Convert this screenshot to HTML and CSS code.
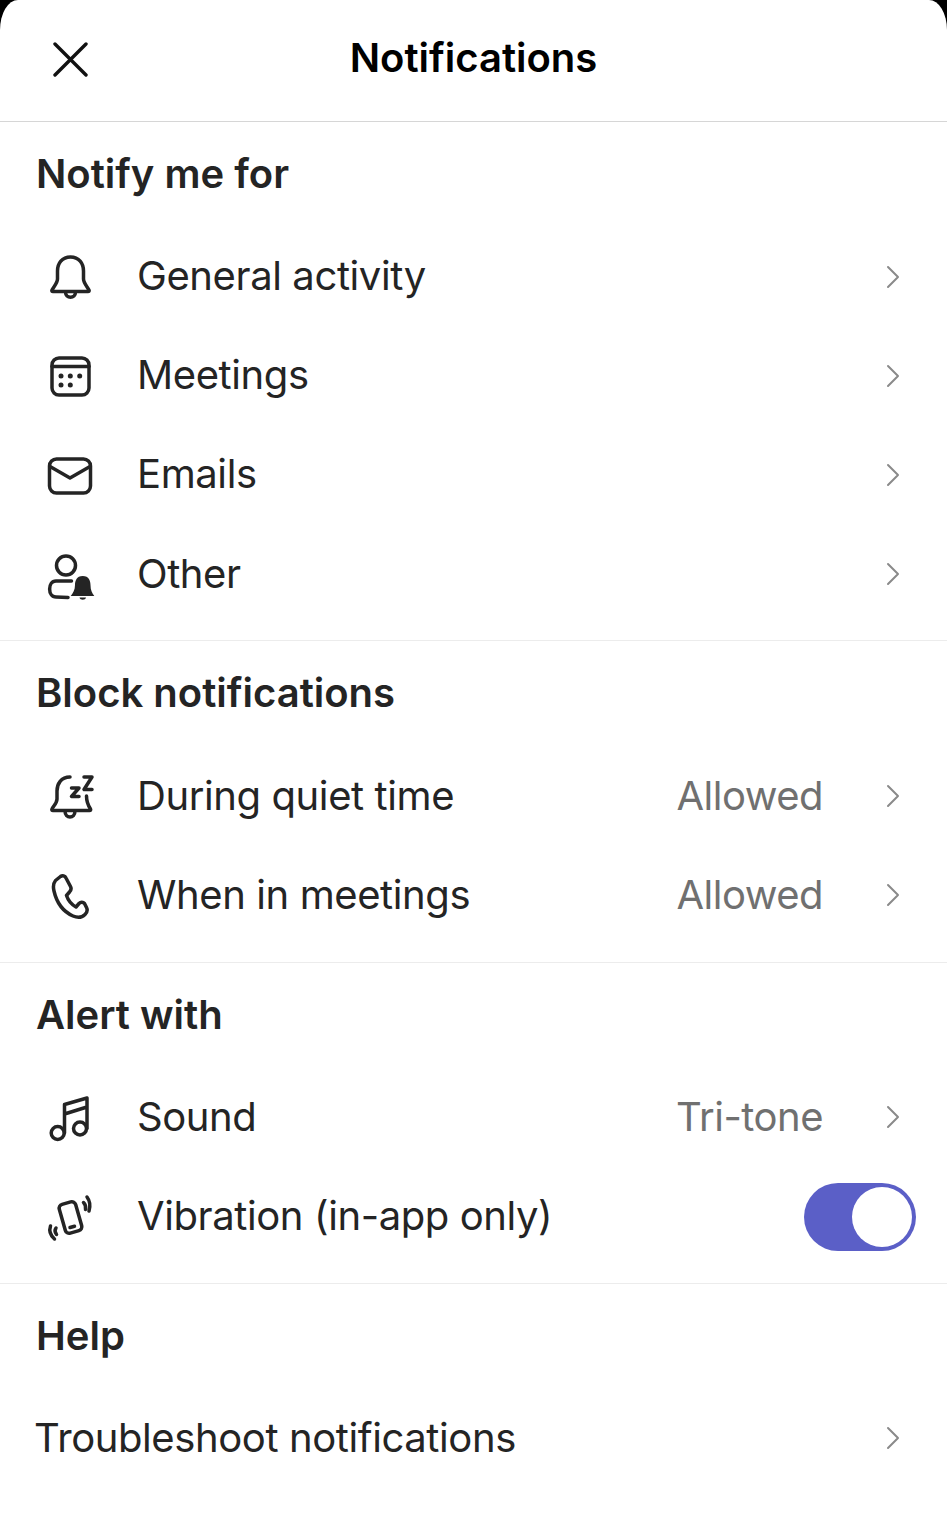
FILE: index.html
```html
<!DOCTYPE html>
<html lang="en">
<head>
    <meta charset="UTF-8" />
    <meta name="viewport" content="width=device-width, initial-scale=1.0" />
    <title>Notifications</title>
    <link rel="stylesheet" href="styles.css">
</head>
<body>
    <div class="sheet">
        <header class="top-bar">
            <svg class="close-icon" viewBox="0 0 36 36"><path d="M3 3 L34 34 M34 3 L3 34" /></svg>
            <h1>Notifications</h1>
        </header>

        <section class="group">
            <h2>Notify me for</h2>
            <div class="row">
                <svg class="row-icon" viewBox="0 0 50 50"><path d="M25.5 5 C17 5 12.5 11.5 12.5 19 L12.5 27 C12.5 31 8.5 35 7 38 C6.5 39 7 39.5 8 39.5 L43 39.5 C44 39.5 44.5 39 44 38 C42.5 35 38.5 31 38.5 27 L38.5 19 C38.5 11.5 34 5 25.5 5 Z M20.5 40 C20.5 47 30.5 47 30.5 40" /></svg>
                <span class="label">General activity</span>
                <svg class="chevron" viewBox="0 0 14 24"><path d="M2 2 L12 12 L2 22" /></svg>
            </div>
            <div class="row">
                <svg class="row-icon" viewBox="0 0 50 50">
                    <rect x="7" y="7" width="37" height="37" rx="7" />
                    <path d="M7 15.500 L44 15.500" />
                    <g class="dots">
                        <circle cx="16" cy="25" r="2.500" /><circle cx="25.300" cy="25" r="2.500" /><circle cx="34.700" cy="25" r="2.500" />
                        <circle cx="16" cy="34" r="2.500" /><circle cx="25.300" cy="34" r="2.500" />
                    </g>
                </svg>
                <span class="label">Meetings</span>
                <svg class="chevron" viewBox="0 0 14 24"><path d="M2 2 L12 12 L2 22" /></svg>
            </div>
            <div class="row">
                <svg class="row-icon" viewBox="0 0 50 50">
                    <rect x="4.500" y="9" width="41" height="34" rx="7" />
                    <path d="M5 16.500 L25 28 L45 16.500" />
                </svg>
                <span class="label">Emails</span>
                <svg class="chevron" viewBox="0 0 14 24"><path d="M2 2 L12 12 L2 22" /></svg>
            </div>
            <div class="row">
                <svg class="row-icon" viewBox="0 0 50 50">
                    <circle cx="21" cy="15.500" r="9.500" />
                    <path d="M26.500 31 L11 31 C2.500 31 2.500 47 11 47 L23 47.500" />
                    <path class="solid" d="M37.700 26 C31.500 26 30 31 30 35 C30 40 28 43 25.700 46 L49.300 46 C47 43 45.500 40 45.500 35 C45.500 31 44 26 37.700 26 Z M34.500 47.500 L41 47.500 C40.500 50.500 35 50.500 34.500 47.500 Z" />
                </svg>
                <span class="label">Other</span>
                <svg class="chevron" viewBox="0 0 14 24"><path d="M2 2 L12 12 L2 22" /></svg>
            </div>
        </section>

        <section class="group">
            <h2>Block notifications</h2>
            <div class="row">
                <svg class="row-icon" viewBox="0 0 50 50">
                    <path d="M25 5 C16 5 12 12 12 19 L12 27 C12 31 8.500 34 7 37 C6.500 38 7 38.500 8 38.500 L44.500 38.500 C45.500 38.500 46 38 45.500 37 C43.500 34 41.500 31 41.500 24 M20 39 C20 47 30 47 30 39" />
                    <path d="M26.500 16 L34 16 L26.500 24.500 L34 24.500 M39 5 L47 5 L39 17.500 L47 17.500" />
                </svg>
                <span class="label">During quiet time</span>
                <span class="value">Allowed</span>
                <svg class="chevron" viewBox="0 0 14 24"><path d="M2 2 L12 12 L2 22" /></svg>
            </div>
            <div class="row">
                <svg class="row-icon" viewBox="0 0 50 50"><path d="M10.500 9.500 L15.500 5.500 C17.500 4 20 4.800 21 7 L25.500 15.500 C26.500 17.500 26 19.500 24.500 21 L21.500 24.500 C23 29 26.500 33.500 31 36 L34 32.500 C35.500 31 38 30.800 39.500 32.500 L41.500 36.500 C42.800 39 42 41.500 40 43.500 C37 46.500 32.500 47 28 45 C18 40.500 11.500 31 9 20 C8 16 8.500 12 10.500 9.500 Z" /></svg>
                <span class="label">When in meetings</span>
                <span class="value">Allowed</span>
                <svg class="chevron" viewBox="0 0 14 24"><path d="M2 2 L12 12 L2 22" /></svg>
            </div>
        </section>

        <section class="group">
            <h2>Alert with</h2>
            <div class="row">
                <svg class="row-icon" viewBox="0 0 50 50">
                    <circle cx="12.700" cy="40" r="6.500" />
                    <circle cx="35" cy="35.500" r="6.500" />
                    <path d="M19.500 40 L19.500 11.500 L42 5 L42 35.500 M19.500 21 L42 14" />
                </svg>
                <span class="label">Sound</span>
                <span class="value">Tri-tone</span>
                <svg class="chevron" viewBox="0 0 14 24"><path d="M2 2 L12 12 L2 22" /></svg>
            </div>
            <div class="row">
                <svg class="row-icon" viewBox="0 0 50 50">
                    <rect x="17" y="10.500" width="17" height="30" rx="4" transform="rotate(-16 25.500 25.500)" />
                    <path d="M25 35.500 L29.500 34.200" />
                    <path d="M38.500 10.500 C40.500 12.500 41 15 40.500 17.500 M42 5 C45 9 45.500 14 44 19 M11 36 C9.500 38 10 40.500 11.500 42.500 M5.500 34 C4 38.500 5.500 43.500 9.500 47" />
                </svg>
                <span class="label">Vibration (in-app only)</span>
                <div class="toggle"><div class="knob"></div></div>
            </div>
        </section>

        <section class="group last">
            <h2>Help</h2>
            <div class="row plain">
                <span class="label">Troubleshoot notifications</span>
                <svg class="chevron" viewBox="0 0 14 24"><path d="M2 2 L12 12 L2 22" /></svg>
            </div>
        </section>
    </div>
</body>
</html>
```

FILE: styles.css
```css
/* Reset and page */
* {
    box-sizing: border-box;
}
html, body {
    margin: 0;
    height: 100%;
    background-color: #000;
}
body {
    overflow: hidden;
    font-family: Inter, "Liberation Sans", sans-serif;
    color: #242424;
}
.sheet {
    height: 1536px;
    background-color: #fff;
    border-radius: 18px 18px 0 0 / 30px 30px 0 0;
}

/* Header */
.top-bar {
    position: relative;
    height: 122px;
    display: flex;
    justify-content: center;
    align-items: center;
    border-bottom: 1px solid #d6d6d6;
}
.top-bar h1 {
    margin: 0 0 6px;
    font-size: 40px;
    font-weight: 600;
    color: #000;
}
.close-icon {
    position: absolute;
    left: 52px;
    top: 41px;
    width: 36px;
    height: 36px;
    fill: none;
    stroke: #111;
    stroke-width: 3.400;
    stroke-linecap: round;
}

/* Sections */
.group {
    padding-bottom: 16.200px;
    border-bottom: 1px solid #ececec;
}
.group.last {
    border-bottom: none;
}
.group h2 {
    height: 105.500px;
    margin: 0;
    padding: 30px 0 0 36px;
    font-size: 40px;
    line-height: 44px;
    font-weight: 600;
}

/* Rows */
.row {
    height: 99.200px;
    display: flex;
    align-items: center;
    padding: 0 47px 0 45px;
}
.row.plain {
    padding-left: 34px;
}
.row-icon {
    width: 50px;
    height: 50px;
    margin-right: 42px;
    flex-shrink: 0;
    fill: none;
    stroke: #242424;
    stroke-width: 3.500;
    stroke-linecap: round;
    stroke-linejoin: round;
}
.row-icon .dots {
    fill: #242424;
    stroke: none;
}
.row-icon .solid {
    fill: #242424;
    stroke: none;
}
.label {
    flex: 1;
    margin-top: -3px;
    font-size: 40px;
    letter-spacing: -0.400px;
}
.value {
    margin-top: -2px;
    margin-right: 63px;
    font-size: 40px;
    letter-spacing: -0.500px;
    color: #707070;
}
.chevron {
    width: 14px;
    height: 24px;
    margin-top: -1px;
    fill: none;
    stroke: #8a8a8a;
    stroke-width: 2;
    stroke-linecap: round;
    stroke-linejoin: round;
}

/* Toggle */
.toggle {
    width: 112px;
    height: 68px;
    margin-right: -16px;
    padding: 4px;
    display: flex;
    justify-content: flex-end;
    border-radius: 34px;
    background-color: #5b5fc7;
}
.knob {
    width: 60px;
    height: 60px;
    border-radius: 50%;
    background-color: #fff;
}
```
